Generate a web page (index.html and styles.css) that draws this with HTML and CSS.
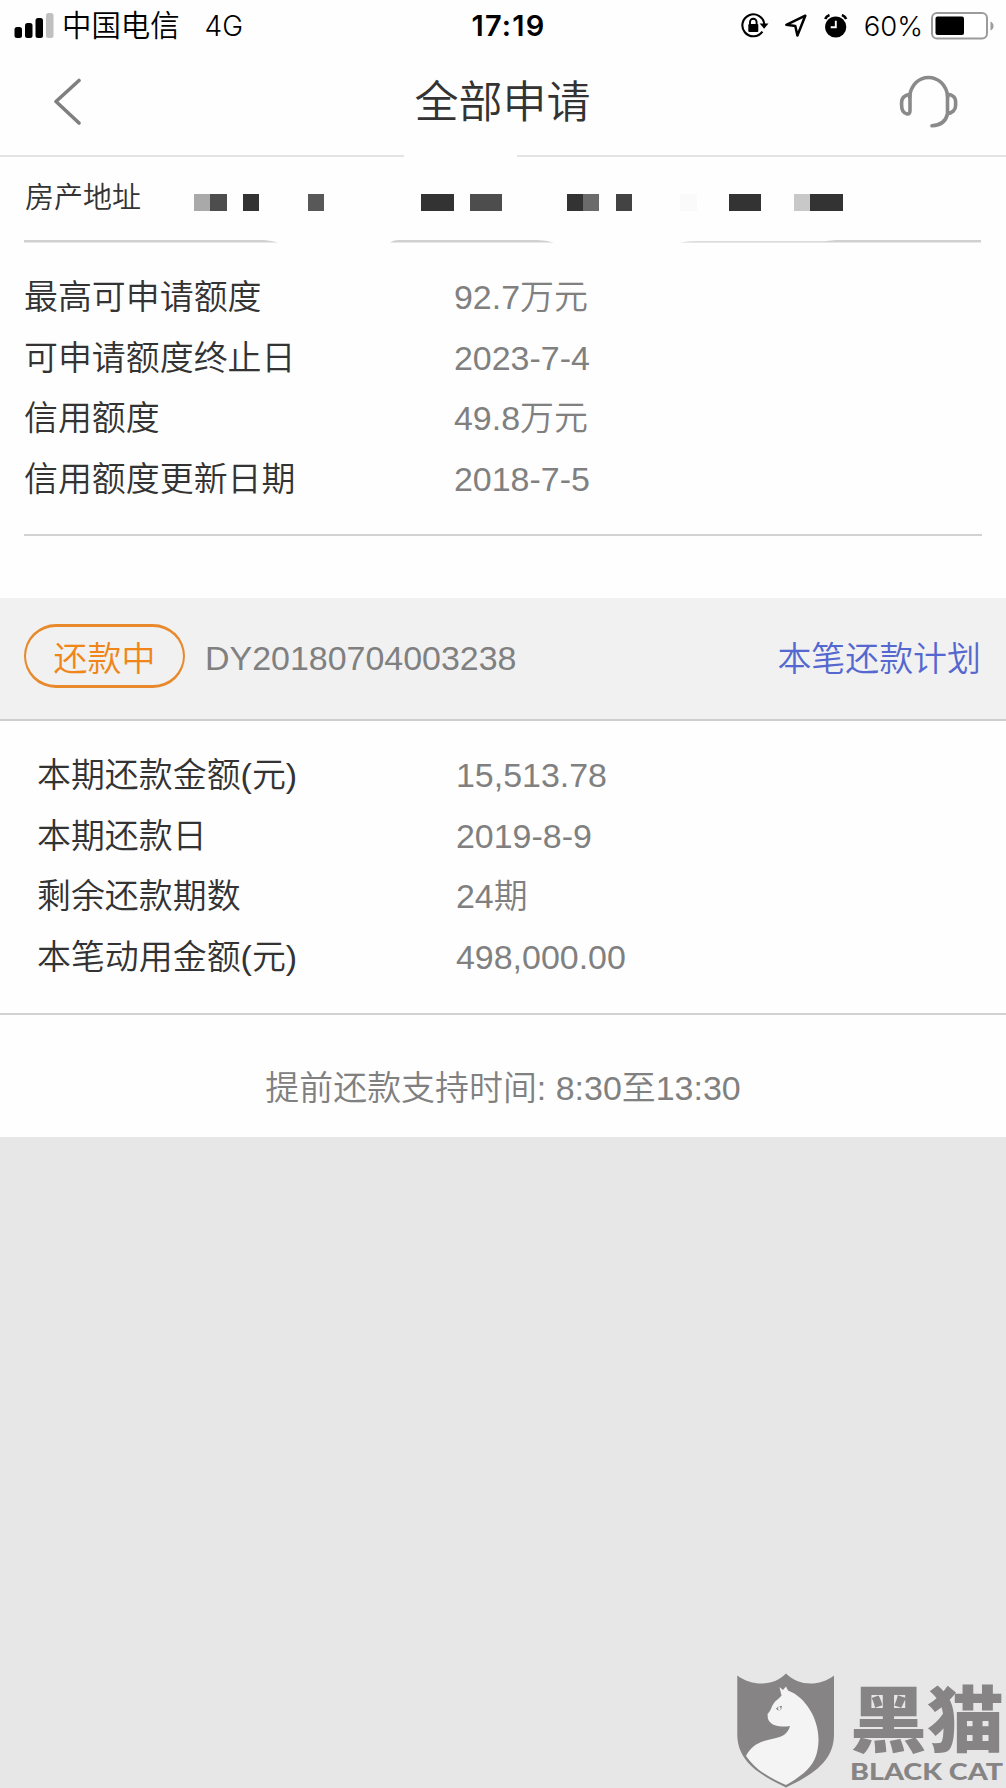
FILE: index.html
```html
<!DOCTYPE html>
<html lang="zh-CN">

<head>
    <meta charset="UTF-8">
    <meta name="viewport" content="width=device-width, initial-scale=1.0">
    <title>全部申请</title>
    <link rel="stylesheet" href="styles.css">
</head>

<body>
    <div class="status-bar">
        <div class="status-left">
            <svg class="signal" width="40" height="25" viewBox="0 0 40 25">
                <rect x="0.5" y="14" width="7.5" height="11" rx="2.5" />
                <rect x="11" y="10" width="7.5" height="15" rx="2.5" />
                <rect x="21.5" y="5" width="7.5" height="20" rx="2.5" />
                <rect x="32" y="0" width="7.5" height="25" rx="2.5" fill="#c0c0c0" />
            </svg>
            <span class="carrier">中国电信</span>
            <span class="network">4G</span>
        </div>
        <div class="status-time">17:19</div>
        <div class="status-right">
            <!-- rotation lock -->
            <svg class="lock" width="28" height="26" viewBox="0 0 28 26">
                <path d="M21.4 18.6A11 11 0 1 1 23.3 11" fill="none" stroke="#000" stroke-width="2.1" />
                <path d="M18.6 10.5h8.9l-4.4 5.2z" />
                <rect x="7.3" y="11" width="10" height="8" rx="1" />
                <path d="M9 11.5V9a3.3 3.3 0 0 1 6.6 0v2.5" fill="none" stroke="#000" stroke-width="1.9" />
            </svg>
            <!-- location -->
            <svg class="location" width="24" height="24" viewBox="0 0 24 24">
                <path d="M21.3 1.7L2.3 10.8L11.3 12L13.4 21.5z" fill="none" stroke="#000" stroke-width="2.5" stroke-linejoin="round" />
            </svg>
            <!-- alarm -->
            <svg class="alarm" width="24" height="24" viewBox="0 0 24 24">
                <circle cx="11.7" cy="13" r="10.6" />
                <path d="M1.2 5A7 7 0 0 1 5.5 1.1M22.2 5A7 7 0 0 0 17.9 1.1" fill="none" stroke="#000" stroke-width="2.6" />
                <path d="M11.8 6.8v6.5H6.7" fill="none" stroke="#fff" stroke-width="1.9" />
            </svg>
            <span class="percent">60%</span>
            <svg class="battery" width="64" height="28" viewBox="0 0 64 28">
                <rect x="1" y="1" width="55" height="25.5" rx="5" fill="#fff" stroke="#9b9b9b" stroke-width="2" />
                <rect x="4.5" y="4.5" width="28.5" height="18.5" rx="2" />
                <path d="M59.5 9.5q3 1.5 3 4.5t-3 4.5z" fill="#9b9b9b" />
            </svg>
        </div>
    </div>

    <div class="nav-bar">
        <svg class="back" width="28" height="48" viewBox="0 0 28 48">
            <path d="M25 2.500L2 23.500L25 45" fill="none" stroke="#7f7f7f" stroke-width="3.600" stroke-linecap="round" stroke-linejoin="round" />
        </svg>
        <h1 class="title">全部申请</h1>
        <svg class="service" width="60" height="54" viewBox="0 0 60 54" fill="none" stroke="#8a8a8a" stroke-width="3.600" stroke-linecap="round" stroke-linejoin="round">
            <path d="M10.500 22C12 9.500 20 2.500 29.500 2.500S47.500 9.500 48.800 22" />
            <path d="M11 19.200V35.500Q11 39.300 8 38.900C4.500 38.200 2.600 34.500 2.600 30V27.500C2.600 23 6 20 11 19.200Z" />
            <path d="M48.500 19.200V38.300C53 38.300 56.600 35 56.600 30.500V26.500C56.600 22 53 19.600 48.500 19.200Z" />
            <path d="M48.500 39C47 45.500 42 50.200 33 50.800" />
        </svg>
    </div>
    <div class="nav-line">
        <span class="nav-line-left"></span>
        <span class="nav-line-right"></span>
    </div>

    <div class="address">
        <span class="address-label">房产地址</span>
        <svg class="mosaic" width="650" height="17" viewBox="0 0 650 17" shape-rendering="crispEdges">
            <rect x="0" width="16" height="17" fill="#a9a9a9" />
            <rect x="16" width="17" height="17" fill="#4d4d4d" />
            <rect x="49" width="16" height="17" fill="#333" />
            <rect x="114" width="16" height="17" fill="#585858" />
            <rect x="227" width="33" height="17" fill="#333" />
            <rect x="276" width="32" height="17" fill="#4d4d4d" />
            <rect x="373" width="16" height="17" fill="#333" />
            <rect x="389" width="16" height="17" fill="#6b6b6b" />
            <rect x="422" width="16" height="17" fill="#434343" />
            <rect x="486" width="17" height="17" fill="#fafafa" />
            <rect x="535" width="32" height="17" fill="#333" />
            <rect x="600" width="16" height="17" fill="#c8c8c8" />
            <rect x="616" width="33" height="17" fill="#333" />
        </svg>
    </div>
    <svg class="address-line" width="957" height="3" viewBox="0 0 957 3" fill="#d0d0d0">
        <path d="M0 0H240Q248 .5 254 2.500H0Z" />
        <path d="M366 2.500Q369 .3 374 0H513Q522 .3 530 2.500Z" />
        <path d="M656 2.500Q664 1.300 672 1.200H800L812 0H957V2.500Z" />
    </svg>

    <div class="quota">
        <div class="row"><span class="label">最高可申请额度</span><span class="value">92.7万元</span></div>
        <div class="row"><span class="label">可申请额度终止日</span><span class="value">2023-7-4</span></div>
        <div class="row"><span class="label">信用额度</span><span class="value">49.8万元</span></div>
        <div class="row"><span class="label">信用额度更新日期</span><span class="value">2018-7-5</span></div>
    </div>

    <div class="loan-header">
        <span class="badge">还款中</span>
        <span class="loan-id">DY20180704003238</span>
        <a class="plan-link">本笔还款计划</a>
    </div>

    <div class="loan">
        <div class="row"><span class="label">本期还款金额(元)</span><span class="value">15,513.78</span></div>
        <div class="row"><span class="label">本期还款日</span><span class="value">2019-8-9</span></div>
        <div class="row"><span class="label">剩余还款期数</span><span class="value">24期</span></div>
        <div class="row"><span class="label">本笔动用金额(元)</span><span class="value">498,000.00</span></div>
    </div>

    <div class="notice">提前还款支持时间: 8:30至13:30</div>

    <div class="watermark">
        <svg class="shield" width="100" height="116" viewBox="0 0 100 116">
            <path d="M1.300 3.500C17 15 38 14 50 1.500C62 14 83 15 98 3.500V62C98 88 80 101 50 115.500C20 101 1.300 88 1.300 62Z" fill="#868484" />
            <path d="M43.500 15L47 18L50 14.500L52 18.500C70 25 83 48 82.500 68C82 88 75 99 50 113C30 104 19 97 10 84C16 72 26 69 38 66.500C46 65 52 62 54 54C48 55 38 55 34 50C31 47 32 44 31.500 42C35 39 35 35 38 31C40 28 43 27 45.500 23.500Z" fill="#f4f4f4" />
            <path d="M40 36.500Q42.500 33.500 46 34Q46 37 43.500 38.500Q41 38.500 40 36.500Z" fill="#868484" />
            <ellipse cx="43.300" cy="36.300" rx="1.200" ry="1.900" fill="#f4f4f4" />
        </svg>
        <div class="mark">
            <svg width="156" height="80" viewBox="0 0 156 80">
                <text class="mark-cn" x="0" y="70" textLength="154" lengthAdjust="spacingAndGlyphs">黑猫</text>
            </svg>
            <svg width="156" height="32" viewBox="0 0 156 32">
                <text class="mark-en" x="0" y="24" textLength="153" lengthAdjust="spacingAndGlyphs">BLACK CAT</text>
            </svg>
        </div>
    </div>
</body>

</html>
```

FILE: styles.css
```css
body {
    font-family: "Liberation Sans", "Noto Sans CJK SC", sans-serif;
    background-color: #fefefe;
    color: #333;
    margin: 0;
    padding: 0;
    font-size: 33.95px;
    font-weight: 350;
    display: flex;
    flex-direction: column;
    height: 1788px;
    overflow: hidden;
}

svg {
    display: block;
    flex: none;
}

/* Status bar */
.status-bar {
    display: grid;
    grid-template-columns: 1fr auto 1fr;
    align-items: center;
    height: 50px;
    padding: 0 11px 0 14px;
    color: #000;
    font-family: Inter, "Noto Sans CJK SC", sans-serif;
    font-size: 29px;
    font-weight: 350;
    line-height: 50px;
}

.status-left,
.status-right {
    display: flex;
    align-items: center;
}

.status-right {
    justify-content: flex-end;
}

.carrier {
    margin-left: 8px;
    padding-top: 1px;
    font-size: 29.4px;
}

.network {
    margin-left: 25px;
    padding-top: 1px;
    font-size: 28px;
}

.status-time {
    padding: 1px 0 0 8px;
    font-size: 29px;
    font-weight: 600;
    letter-spacing: 1.2px;
}

.location {
    margin-left: 15px;
}

.alarm {
    margin-left: 16px;
}

.percent {
    margin: 0 8px 0 16px;
    padding-top: 1px;
    font-size: 27.5px;
}

/* Navigation */
.nav-bar {
    display: flex;
    align-items: center;
    justify-content: space-between;
    height: 105px;
    padding: 0 47px 2px 54px;
    box-sizing: border-box;
}

.title {
    margin: 0 0 0 24px;
    font-size: 44px;
    font-weight: 350;
    line-height: 105px;
    padding-top: 2px;
}

.nav-line {
    display: flex;
    justify-content: space-between;
    height: 2px;
}

.nav-line-left {
    width: 404px;
    background-color: #e4e4e4;
}

.nav-line-right {
    width: 489px;
    background-color: #e4e4e4;
}

/* Address */
.address {
    display: flex;
    align-items: center;
    height: 83px;
    padding-left: 25px;
}

.address-label {
    width: 169px;
    font-size: 29px;
    line-height: 40px;
    margin-bottom: 2px;
}

.mosaic {
    margin-top: 8px;
}

.address-line {
    margin-left: 24px;
}

/* Detail rows */
.quota {
    margin: 0 24px;
    padding: 24px 0;
    height: 243px;
    border-bottom: 2px solid #d2d2d2;
}

.row {
    display: flex;
    height: 60.7px;
    line-height: 60.7px;
}

.label {
    width: 430px;
}

.value {
    color: #808080;
}

.loan-header {
    display: flex;
    align-items: center;
    height: 121px;
    margin-top: 62px;
    padding: 0 25px 0 24px;
    background-color: #f1f1f1;
    border-bottom: 2px solid #cecece;
}

.badge {
    box-sizing: border-box;
    width: 161px;
    height: 64px;
    margin-bottom: 5px;
    border: solid #e88a2c;
    border-width: 3px 2px;
    border-radius: 32px;
    color: #f08519;
    line-height: 64px;
    text-align: center;
}

.loan-id {
    margin-left: 20px;
    color: #808080;
}

.plan-link {
    margin-left: auto;
    margin-bottom: 4px;
    color: #5468cf;
}

.loan {
    padding: 24px 37px;
    height: 244px;
    border-bottom: 2px solid #d2d2d2;
}

.loan .label {
    width: 419px;
}

.notice {
    height: 122px;
    color: #808080;
    line-height: 147px;
    text-align: center;
}

/* Watermark in the corner of the empty area */
.watermark {
    flex: 1;
    display: flex;
    align-items: flex-end;
    justify-content: flex-end;
    background-color: #e7e7e7;
}

.shield {
    margin-right: 14px;
}

.mark {
    width: 156px;
}

.mark svg {
    overflow: visible;
}

.mark-cn {
    fill: #868484;
    font-family: "Noto Sans CJK SC", sans-serif;
    font-size: 72px;
    font-weight: 900;
}

.mark-en {
    fill: #868484;
    font-family: Lato, sans-serif;
    font-size: 23.5px;
    font-weight: 900;
}
```
